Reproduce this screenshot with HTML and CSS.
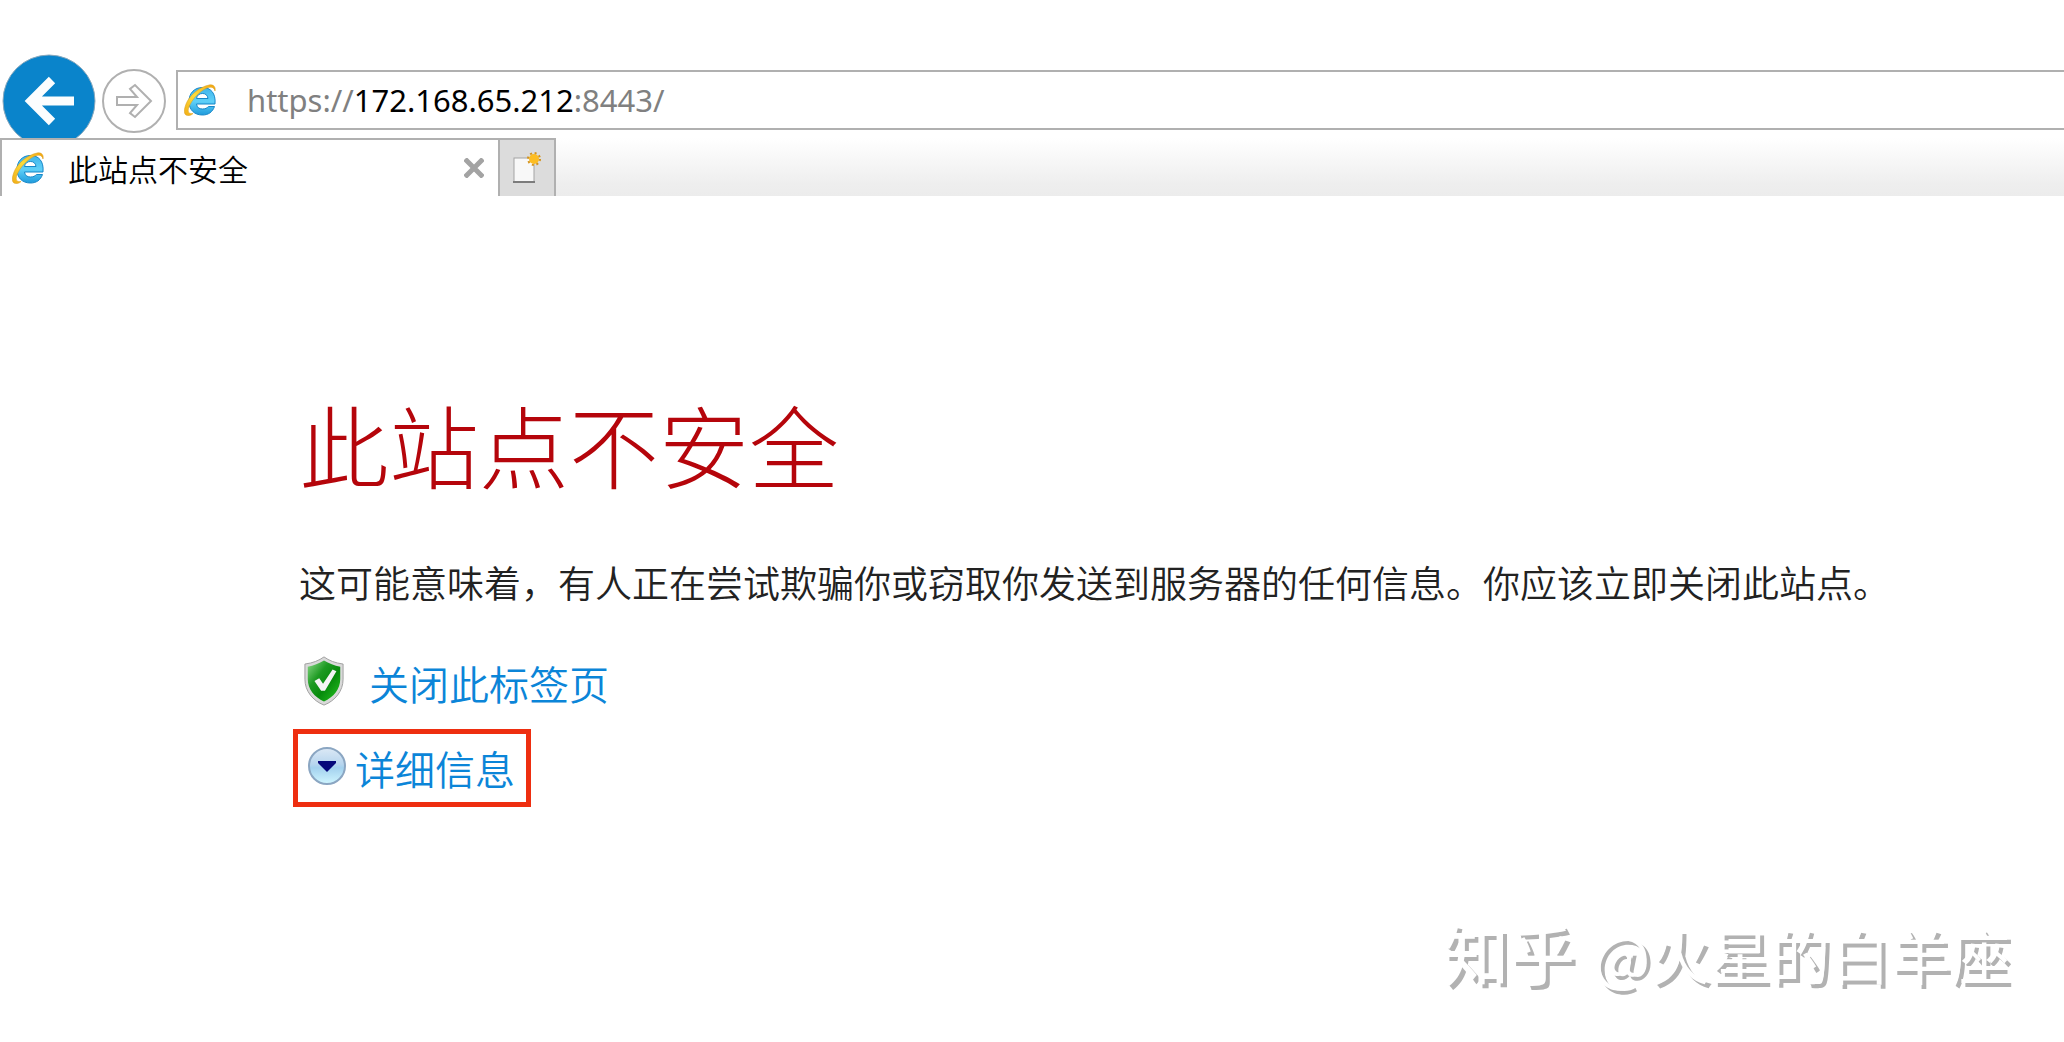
FILE: index.html
```html
<!DOCTYPE html>
<html lang="zh-CN">
<head>
<meta charset="utf-8">
<title>此站点不安全</title>
<link rel="stylesheet" href="styles.css">
</head>
<body>
<svg class="defs" aria-hidden="true">
  <defs>
    <linearGradient id="blue" x1="0" y1="0" x2="0" y2="1"><stop offset="0" stop-color="#3fb4ea"/><stop offset="0.500" stop-color="#5fd0f8"/><stop offset="1" stop-color="#1f9bdc"/></linearGradient>
    <linearGradient id="gold" x1="1" y1="0" x2="0" y2="1"><stop offset="0" stop-color="#f3a511"/><stop offset="0.500" stop-color="#fcdc3c"/><stop offset="1" stop-color="#f2ae16"/></linearGradient>
    <symbol id="ie" viewBox="0 0 32 32">
      <path d="M31 20H12.500C13 23.500 15 25 18.500 25C21.500 25 23 24 24.500 22.500H30.500C28.500 28 24.500 31 18.500 31C10.500 31 5 26 5 17.500C5 9 10.500 3.500 18.500 3.500C26.500 3.500 32 9 31 20ZM12.500 14.500H24C23.500 11 21.500 9.500 18.500 9.500C15.500 9.500 13 11 12.500 14.500Z" fill="url(#blue)" stroke="#1787c8" stroke-width="1"/>
      <path d="M31 7C32 3 29.500 0 25 1C15 3 5 12 2 20C-1 28 0 32 5 31.500C7 31.200 8 30.500 9 29.500C5 30 3 28 5 23C8 15 16 7 23 4C27 2.300 30 3 31 7Z" fill="url(#gold)" stroke="#d99a1a" stroke-width="0.500"/>
    </symbol>
  </defs>
</svg>
<header class="chrome">
  <div class="toolbar">
    <button class="nav back" type="button" aria-label="后退">
      <svg viewBox="0 0 94 94" width="94" height="94"><circle cx="47" cy="47" r="46" fill="#0a84cb" stroke="#8aa9bd" stroke-width="1"/><path d="M72 47H28M50 26L29 47L50 68" fill="none" stroke="#fbfdfe" stroke-width="9"/></svg>
    </button>
    <button class="nav forward" type="button" aria-label="前进">
      <svg viewBox="0 0 64 64" width="64" height="64"><circle cx="32" cy="32" r="31" fill="#fff" stroke="#b0b0b0" stroke-width="2"/><path d="M15 28H35L28 20L33 16L49 32L33 48L28 44L35 36H15Z" fill="#fff" stroke="#b0b0b0" stroke-width="2"/></svg>
    </button>
    <div class="address">
      <svg class="ie" width="32" height="32"><use href="#ie"/></svg>
      <a class="url" href="#">https://<span class="host">172.168.65.212</span>:8443/</a>
    </div>
  </div>
  <div class="tabs">
    <div class="tab">
      <svg class="ie" width="32" height="32"><use href="#ie"/></svg>
      <span class="tab-title">此站点不安全</span>
      <button class="close" type="button" aria-label="关闭标签页"><svg viewBox="0 0 20 20" width="20" height="20"><path d="M1 1L19 19M19 1L1 19" stroke="#a3a3a3" stroke-width="5"/></svg></button>
    </div>
    <button class="new-tab" type="button" aria-label="新建标签页">
      <svg viewBox="0 0 28 32" width="28" height="32">
        <rect x="1" y="6" width="20" height="24" fill="#f8f8f8" stroke="#a4a4a4" stroke-width="1"/><path d="M0 30H22" stroke="#7c7c7c" stroke-width="2"/>
        <circle cx="21" cy="7" r="5" fill="#fdbd22"/><circle cx="21" cy="7" r="6" fill="none" stroke="#d4921a" stroke-width="2" stroke-dasharray="2 2.700"/>
      </svg>
    </button>
  </div>
</header>
<main class="page">
  <h1>此站点不安全</h1>
  <p class="message">这可能意味着，有人正在尝试欺骗你或窃取你发送到服务器的任何信息。你应该立即关闭此站点。</p>
  <a class="action" href="#">
    <svg viewBox="0 0 44 56" width="42" height="50" preserveAspectRatio="none">
      <defs><linearGradient id="green" x1="0" y1="0" x2="1" y2="1"><stop offset="0" stop-color="#8edb8a"/><stop offset="0.350" stop-color="#1d9a22"/><stop offset="0.600" stop-color="#078a0c"/><stop offset="1" stop-color="#27c522"/></linearGradient></defs>
      <path d="M22 1C27 5 34 8 42 9V26C42 39 34 50 22 55C10 50 2 39 2 26V9C10 8 17 5 22 1Z" fill="#d9d9d9" stroke="#9b9b9b" stroke-width="1"/>
      <path d="M22 5C27 8 33 11 39 12V26C39 37 32 46 22 51C12 46 5 37 5 26V12C11 11 17 8 22 5Z" fill="url(#green)"/>
      <path d="M12 28L17 25L21 31L31 15L35 17L23 39H19Z" fill="#f4f4f4"/>
    </svg>
    <span>关闭此标签页</span>
  </a>
  <a class="action details" href="#">
    <svg viewBox="0 0 40 42" width="40" height="42">
      <defs><linearGradient id="glass" x1="0" y1="0" x2="0" y2="1"><stop offset="0" stop-color="#dce9f6"/><stop offset="0.450" stop-color="#b7d5ee"/><stop offset="0.550" stop-color="#a3d1ee"/><stop offset="1" stop-color="#d0f6ff"/></linearGradient></defs>
      <ellipse cx="20" cy="21" rx="18" ry="18" fill="url(#glass)" stroke="#8ba6c2" stroke-width="2"/><path d="M11 16H29V18L20 27L11 18Z" fill="#06087a"/>
    </svg>
    <span>详细信息</span>
  </a>
</main>
<footer class="watermark"><span class="site">知乎</span> @火星的白羊座</footer>
</body>
</html>
```
FILE: styles.css
```css
* { box-sizing: border-box; }
body {
  margin: 0;
  min-height: 100vh;
  display: flex;
  flex-direction: column;
  background: #fff;
  color: #222;
  font-family: "Noto Sans", "Noto Sans CJK SC", sans-serif;
}
.defs { position: absolute; width: 0; height: 0; }
svg { display: block; flex: none; }
button { padding: 0; border: 0; background: none; }
a { text-decoration: none; }
.toolbar {
  display: flex;
  align-items: flex-start;
  height: 138px;
  padding: 54px 0 0 2px;
}
.nav { flex: none; }
.back { width: 94px; height: 84px; overflow: hidden; }
.forward { margin: 15px 10px 0 6px; }
.address {
  flex: 1;
  display: flex;
  align-items: center;
  gap: 31px;
  height: 60px;
  margin-top: 16px;
  padding-left: 6px;
  border: 2px solid #b0b0b0;
  border-right: 0;
}
.url { color: #808080; font-size: 31px; line-height: 40px; }
.host { color: #000; }
.tabs {
  display: flex;
  height: 58px;
  background: linear-gradient(#fff, #eee 80%, #ececec);
}
.tab {
  display: flex;
  align-items: center;
  width: 498px;
  padding: 0 14px 0 10px;
  border: solid #b0b0b0;
  border-width: 2px 0 0 2px;
  background: #fff;
}
.tab-title {
  flex: 1;
  margin-left: 24px;
  color: #000;
  font-family: "Noto Sans CJK SC", sans-serif;
  font-size: 30px;
  font-weight: 350;
  line-height: 40px;
}
.new-tab {
  display: grid;
  place-items: center;
  width: 58px;
  border: 2px solid #b0b0b0;
  border-bottom: 0;
  background: #dcdcdc;
}
.page {
  display: flex;
  flex-direction: column;
  align-items: flex-start;
  padding: 183px 60px 0 299px;
  font-family: "Noto Sans CJK SC", sans-serif;
  font-weight: 350;
}
h1 {
  margin: 0;
  color: #b5050b;
  font-size: 90px;
  font-weight: 300;
  line-height: 128px;
}
.message { margin: 47px 0 0; font-size: 37px; line-height: 56px; }
.action {
  display: flex;
  align-items: center;
  gap: 24px;
  margin-top: 45px;
  padding-left: 4px;
  color: #0b85d8;
  font-size: 40px;
  line-height: 56px;
}
.action svg { margin-bottom: 4px; }
.details {
  gap: 8px;
  height: 78px;
  margin: 18px 0 0 -6px;
  padding: 0 11px 0 9px;
  border: 5px solid #ee2e10;
}
.watermark {
  margin: auto 54px 44px 0;
  align-self: flex-end;
  color: #fff;
  font-family: "Noto Sans CJK SC", sans-serif;
  font-size: 60px;
  font-weight: 400;
  line-height: 88px;
  text-shadow: 4px 4px 0 #b2b2b2;
}
.site { margin-right: 5px; font-size: 66px; font-weight: 500; }
```
